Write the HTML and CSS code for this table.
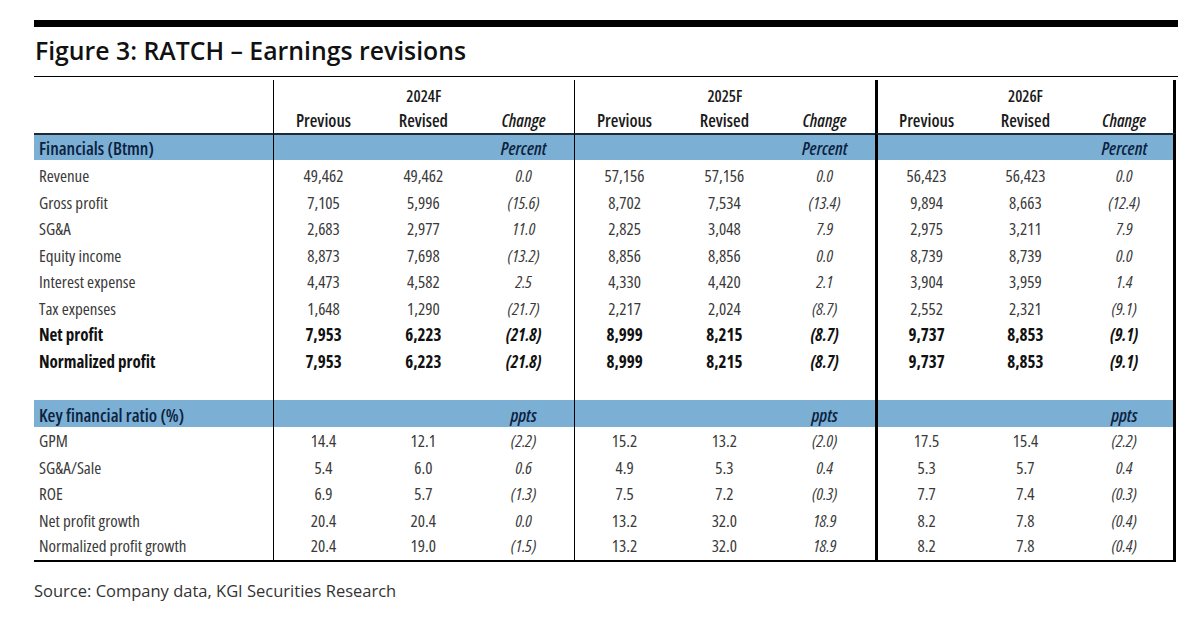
FILE: index.html
```html
<!DOCTYPE html>
<html lang="en">
<head>
<meta charset="utf-8">
<title>Figure 3: RATCH – Earnings revisions</title>
<link rel="stylesheet" href="styles.css">
</head>
<body>
<div class="page">
  <div class="topbar"></div>
  <h1 class="title">Figure 3: RATCH – Earnings revisions</h1>
  <table class="rev">
    <colgroup>
      <col class="c-label">
      <col class="c-num"><col class="c-num"><col class="c-num">
      <col class="c-num"><col class="c-num"><col class="c-num">
      <col class="c-num"><col class="c-num"><col class="c-num">
    </colgroup>
    <thead>
      <tr class="yr">
        <th class="lab"></th>
        <th colspan="3" class="g1">2024F</th>
        <th colspan="3" class="g2">2025F</th>
        <th colspan="3" class="g3 last">2026F</th>
      </tr>
      <tr class="sub">
        <th class="lab"></th>
        <th class="g1">Previous</th><th>Revised</th><th class="chg">Change</th>
        <th class="g2">Previous</th><th>Revised</th><th class="chg">Change</th>
        <th class="g3">Previous</th><th>Revised</th><th class="chg last">Change</th>
      </tr>
    </thead>
    <tbody>
      <tr class="band band-top">
        <td class="lab">Financials (Btmn)</td>
        <td class="g1"></td><td></td><td class="chg">Percent</td>
        <td class="g2"></td><td></td><td class="chg">Percent</td>
        <td class="g3"></td><td></td><td class="chg last">Percent</td>
      </tr>
      <tr class="gap gap-a">
        <td class="lab"></td>
        <td class="g1"></td><td></td><td></td>
        <td class="g2"></td><td></td><td></td>
        <td class="g3"></td><td></td><td class="last"></td>
      </tr>
      <tr class="row">
        <td class="lab">Revenue</td>
        <td class="g1">49,462</td><td>49,462</td><td class="chg">0.0</td>
        <td class="g2">57,156</td><td>57,156</td><td class="chg">0.0</td>
        <td class="g3">56,423</td><td>56,423</td><td class="chg last">0.0</td>
      </tr>
      <tr class="row">
        <td class="lab">Gross profit</td>
        <td class="g1">7,105</td><td>5,996</td><td class="chg">(15.6)</td>
        <td class="g2">8,702</td><td>7,534</td><td class="chg">(13.4)</td>
        <td class="g3">9,894</td><td>8,663</td><td class="chg last">(12.4)</td>
      </tr>
      <tr class="row">
        <td class="lab">SG&amp;A</td>
        <td class="g1">2,683</td><td>2,977</td><td class="chg">11.0</td>
        <td class="g2">2,825</td><td>3,048</td><td class="chg">7.9</td>
        <td class="g3">2,975</td><td>3,211</td><td class="chg last">7.9</td>
      </tr>
      <tr class="row">
        <td class="lab">Equity income</td>
        <td class="g1">8,873</td><td>7,698</td><td class="chg">(13.2)</td>
        <td class="g2">8,856</td><td>8,856</td><td class="chg">0.0</td>
        <td class="g3">8,739</td><td>8,739</td><td class="chg last">0.0</td>
      </tr>
      <tr class="row">
        <td class="lab">Interest expense</td>
        <td class="g1">4,473</td><td>4,582</td><td class="chg">2.5</td>
        <td class="g2">4,330</td><td>4,420</td><td class="chg">2.1</td>
        <td class="g3">3,904</td><td>3,959</td><td class="chg last">1.4</td>
      </tr>
      <tr class="row">
        <td class="lab">Tax expenses</td>
        <td class="g1">1,648</td><td>1,290</td><td class="chg">(21.7)</td>
        <td class="g2">2,217</td><td>2,024</td><td class="chg">(8.7)</td>
        <td class="g3">2,552</td><td>2,321</td><td class="chg last">(9.1)</td>
      </tr>
      <tr class="row strong">
        <td class="lab">Net profit</td>
        <td class="g1">7,953</td><td>6,223</td><td class="chg">(21.8)</td>
        <td class="g2">8,999</td><td>8,215</td><td class="chg">(8.7)</td>
        <td class="g3">9,737</td><td>8,853</td><td class="chg last">(9.1)</td>
      </tr>
      <tr class="row strong">
        <td class="lab">Normalized profit</td>
        <td class="g1">7,953</td><td>6,223</td><td class="chg">(21.8)</td>
        <td class="g2">8,999</td><td>8,215</td><td class="chg">(8.7)</td>
        <td class="g3">9,737</td><td>8,853</td><td class="chg last">(9.1)</td>
      </tr>
      <tr class="gap gap-b">
        <td class="lab"></td>
        <td class="g1"></td><td></td><td></td>
        <td class="g2"></td><td></td><td></td>
        <td class="g3"></td><td></td><td class="last"></td>
      </tr>
      <tr class="band band-ratio">
        <td class="lab">Key financial ratio (%)</td>
        <td class="g1"></td><td></td><td class="chg">ppts</td>
        <td class="g2"></td><td></td><td class="chg">ppts</td>
        <td class="g3"></td><td></td><td class="chg last">ppts</td>
      </tr>
      <tr class="gap gap-c">
        <td class="lab"></td>
        <td class="g1"></td><td></td><td></td>
        <td class="g2"></td><td></td><td></td>
        <td class="g3"></td><td></td><td class="last"></td>
      </tr>
      <tr class="row">
        <td class="lab">GPM</td>
        <td class="g1">14.4</td><td>12.1</td><td class="chg">(2.2)</td>
        <td class="g2">15.2</td><td>13.2</td><td class="chg">(2.0)</td>
        <td class="g3">17.5</td><td>15.4</td><td class="chg last">(2.2)</td>
      </tr>
      <tr class="row">
        <td class="lab">SG&amp;A/Sale</td>
        <td class="g1">5.4</td><td>6.0</td><td class="chg">0.6</td>
        <td class="g2">4.9</td><td>5.3</td><td class="chg">0.4</td>
        <td class="g3">5.3</td><td>5.7</td><td class="chg last">0.4</td>
      </tr>
      <tr class="row">
        <td class="lab">ROE</td>
        <td class="g1">6.9</td><td>5.7</td><td class="chg">(1.3)</td>
        <td class="g2">7.5</td><td>7.2</td><td class="chg">(0.3)</td>
        <td class="g3">7.7</td><td>7.4</td><td class="chg last">(0.3)</td>
      </tr>
      <tr class="row">
        <td class="lab">Net profit growth</td>
        <td class="g1">20.4</td><td>20.4</td><td class="chg">0.0</td>
        <td class="g2">13.2</td><td>32.0</td><td class="chg">18.9</td>
        <td class="g3">8.2</td><td>7.8</td><td class="chg last">(0.4)</td>
      </tr>
      <tr class="row end">
        <td class="lab">Normalized profit growth</td>
        <td class="g1">20.4</td><td>19.0</td><td class="chg">(1.5)</td>
        <td class="g2">13.2</td><td>32.0</td><td class="chg">18.9</td>
        <td class="g3">8.2</td><td>7.8</td><td class="chg last">(0.4)</td>
      </tr>
    </tbody>
  </table>
  <p class="source">Source: Company data, KGI Securities Research</p>
</div>
</body>
</html>
```

FILE: styles.css
```css
html, body {
  margin: 0;
  padding: 0;
  background: #ffffff;
}

.page {
  padding: 20px 0 0 34px;
  width: 1144px;
}

.topbar {
  height: 7px;
  background: #000000;
}

.title {
  margin: 7px 0 0 0;
  padding: 0 0 10px 1px;
  height: 32px;
  line-height: 32px;
  font-family: "Open Sans", "Liberation Sans", sans-serif;
  font-weight: 600;
  font-size: 24.8px;
  color: #111111;
  border-bottom: 1px solid #000000;
}

.rev {
  margin-top: 3px;
  border-collapse: separate;
  border-spacing: 0;
  table-layout: fixed;
  width: 1142px;
  font-family: "Open Sans", "Liberation Sans", sans-serif;
  font-stretch: 75%;
  font-size: 17px;
  color: #3a3a3a;
}

.c-label { width: 238px; }
.c-num { width: 100px; }

.rev th,
.rev td {
  padding: 0;
  text-align: center;
  white-space: nowrap;
  box-sizing: border-box;
}

.rev .lab {
  text-align: left;
  padding-left: 5px;
}

.rev .g1 { border-left: 1px solid #000000; }
.rev .g2 { border-left: 1px solid #000000; }
.rev .g3 { border-left: 3px solid #000000; }
.rev .last { border-right: 3px solid #000000; }

.rev .chg { font-style: italic; }

/* header */
.yr th {
  height: 28px;
  font-weight: 600;
  font-size: 16px;
  color: #1a1a1a;
  vertical-align: middle;
  padding-top: 4px;
}

.sub th {
  height: 25px;
  font-weight: 600;
  font-size: 17.5px;
  color: #1a1a1a;
  vertical-align: bottom;
  padding-bottom: 1px;
}

/* blue bands */
.band td {
  background: #7bafd4;
  color: #0c2240;
  font-weight: 600;
  font-size: 18px;
}

.band-top td {
  height: 25px;
  border-top: 2px solid #1c2a3a;
  padding-top: 1px;
}

.band-ratio td {
  height: 27px;
  padding-top: 3px;
}

/* gaps */
.gap-a td { height: 4px; }
.gap-b td { height: 24px; }
.gap-c td { height: 2px; }

/* data rows */
.row td {
  height: 26.5px;
  line-height: 18px;
  vertical-align: middle;
  padding-bottom: 2px;
}

.row.strong td {
  font-weight: 700;
  font-size: 17px;
  color: #111111;
}

.row.end td {
  border-bottom: 2px solid #000000;
}

.source {
  margin: 19px 0 0 0;
  line-height: 20px;
  font-family: "Open Sans", "Liberation Sans", sans-serif;
  font-size: 16.5px;
  color: #333333;
}
```
